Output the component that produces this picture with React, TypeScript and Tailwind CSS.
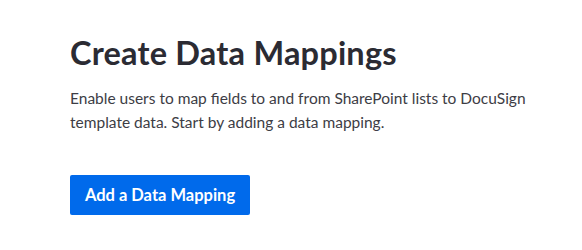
import React from "react";

export default function App() {
  return (
    <div className="w-[582px] h-[250px] bg-white font-['Lato',sans-serif]">
      <div className="pl-[70px] pt-[33px]">
        <h1 className="text-[32.5px] leading-[40px] font-bold text-[#2b2b33] tracking-[0.2px]">
          Create Data Mappings
        </h1>
        <p className="mt-[13px] w-[480px] text-[15.5px] leading-[24px] text-[#3d3d45]">
          Enable users to map fields to and from SharePoint lists to DocuSign
          template data. Start by adding a data mapping.
        </p>
        <button className="block mt-[41px] h-[40px] w-[180px] rounded-[2px] bg-[#006aeb] text-[16.5px] font-bold text-white">
          Add a Data Mapping
        </button>
      </div>
    </div>
  );
}
